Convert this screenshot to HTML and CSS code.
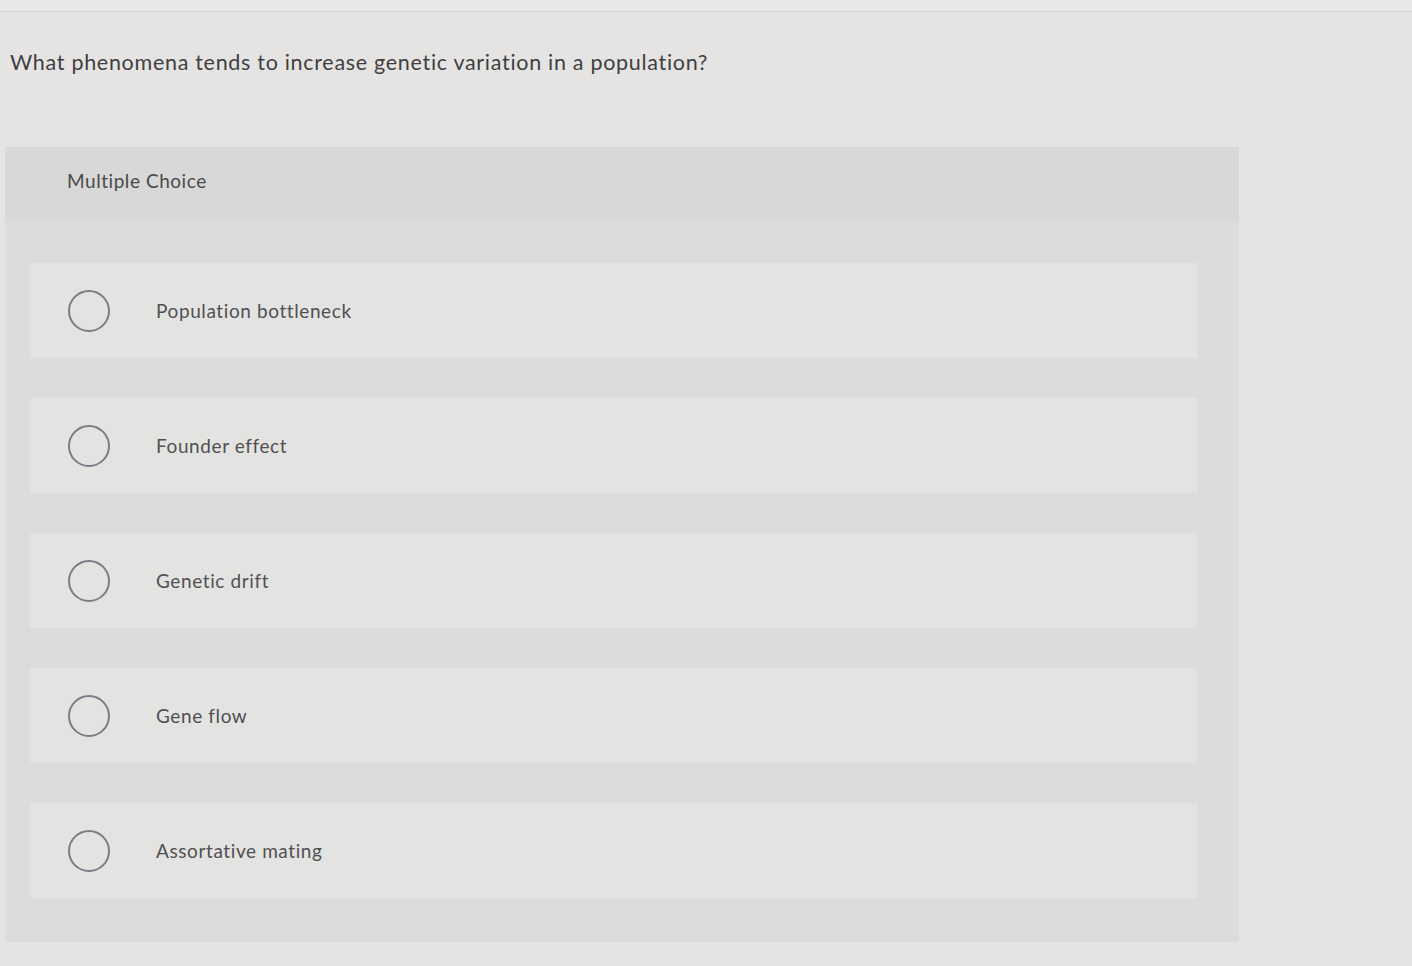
FILE: index.html
```html
<!DOCTYPE html>
<html lang="en">
<head>
	<meta charset="UTF-8">
	<title>Multiple Choice</title>
	<link rel="stylesheet" href="styles.css">
</head>
<body>
	<div class="topline"></div>
	<p class="question">What phenomena tends to increase genetic variation in a population?</p>

	<div class="panel">
		<div class="panel-head">Multiple Choice</div>
		<div class="choices">
			<label class="choice"><span class="radio"></span><span class="label">Population bottleneck</span></label>
			<label class="choice"><span class="radio"></span><span class="label">Founder effect</span></label>
			<label class="choice"><span class="radio"></span><span class="label">Genetic drift</span></label>
			<label class="choice"><span class="radio"></span><span class="label">Gene flow</span></label>
			<label class="choice"><span class="radio"></span><span class="label">Assortative mating</span></label>
		</div>
	</div>
</body>
</html>
```

FILE: styles.css
```css
* {
	margin: 0;
	padding: 0;
	box-sizing: border-box;
}
body {
	background: #e5e4e2;
	font-family: Lato, "Open Sans", "Liberation Sans", sans-serif;
	color: #4d4d4f;
	height: 966px;
	overflow: hidden;
}
.topline {
	height: 12px;
	border-bottom: 1px solid #d6d5d3;
	background: #e9e8e6;
}
.question {
	padding: 36px 0 0 10px;
	font-size: 21.5px;
	line-height: 28px;
	color: #3f3f42;
	letter-spacing: 0.7px;
}
.panel {
	margin: 71px 0 0 5px;
	width: 1234px;
	background: #dcdcda;
}
.panel-head {
	height: 74px;
	padding: 22px 0 0 62px;
	font-size: 19px;
	line-height: 24px;
	letter-spacing: 0.55px;
	color: #4a4a4d;
	background: #d8d8d6;
}
.choices {
	display: flex;
	flex-direction: column;
	gap: 40px;
	padding: 42px 42px 44px 25px;
}
.choice {
	display: flex;
	align-items: center;
	height: 95px;
	padding-left: 38px;
	background: #e3e3e1;
	cursor: pointer;
}
.radio {
	width: 42px;
	height: 42px;
	border: 2px solid #7c7c84;
	border-radius: 50%;
	flex-shrink: 0;
}
.label {
	margin-left: 46px;
	font-size: 19px;
	letter-spacing: 0.6px;
	color: #505053;
}
```
